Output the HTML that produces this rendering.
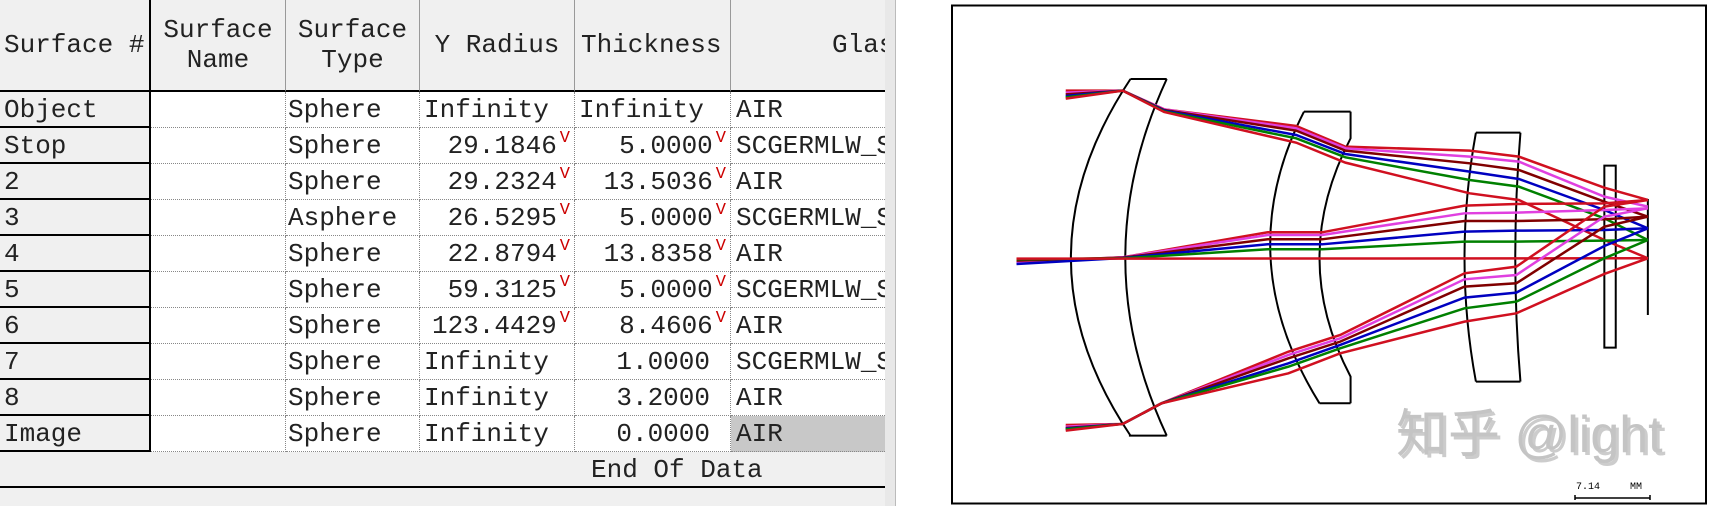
<!DOCTYPE html>
<html><head><meta charset="utf-8"><style>
*{margin:0;padding:0;box-sizing:border-box}
body{width:1712px;height:506px;overflow:hidden;background:#fff;position:relative;font-family:"Liberation Mono","DejaVu Sans Mono",monospace;font-size:26px;color:#222}
.t{position:absolute;left:0;top:0;width:885px;height:506px;background:#f0f0f0;overflow:hidden}
.c{position:absolute;height:36px;line-height:36px;white-space:nowrap;overflow:hidden}
.w{background:#fff;border-right:1px dotted #888;border-bottom:1px dotted #888}
.g{background:#f0f0f0;border-right:2px solid #000;border-bottom:2px solid #000}
.v{color:#c00;font-size:17px;vertical-align:top;line-height:22px;margin-left:3px}
.h{position:absolute;top:0;height:92px;border-right:1px solid #999;border-bottom:2px solid #000;background:#f0f0f0;text-align:center;line-height:30px;padding-top:15px}
</style></head><body>
<div class="t">
<div class="h" style="left:0;width:151px;border-right:2px solid #000;text-align:left;padding-top:30px;padding-left:4px">Surface #</div>
<div class="h" style="left:151px;width:135px">Surface<br>Name</div>
<div class="h" style="left:286px;width:134px">Surface<br>Type</div>
<div class="h" style="left:420px;width:155px;padding-top:30px">Y Radius</div>
<div class="h" style="left:575px;width:156px;padding-top:30px;text-align:left;padding-left:6px">Thickness</div>
<div class="h" style="left:731px;width:154px;padding-top:30px;text-align:left;padding-left:101px;border-right:none">Glass</div>
<div id="rows"></div>
<div style="position:absolute;left:0;top:452px;width:885px;height:36px;border-bottom:2px solid #000;line-height:36px;padding-left:591px">End Of Data</div>
</div>
<div style="position:absolute;left:885px;top:0;width:11px;height:506px;background:#e8e8e8;border-right:1px solid #bbb"></div>
<script>
var d=[["Object","Sphere","Infinity",0,"Infinity",0,"AIR",1],
["Stop","Sphere","29.1846",1,"5.0000",1,"SCGERMLW_S"],
["2","Sphere","29.2324",1,"13.5036",1,"AIR"],
["3","Asphere","26.5295",1,"5.0000",1,"SCGERMLW_S"],
["4","Sphere","22.8794",1,"13.8358",1,"AIR"],
["5","Sphere","59.3125",1,"5.0000",1,"SCGERMLW_S"],
["6","Sphere","123.4429",1,"8.4606",1,"AIR"],
["7","Sphere","Infinity",0,"1.0000",0,"SCGERMLW_S"],
["8","Sphere","Infinity",0,"3.2000",0,"AIR"],
["Image","Sphere","Infinity",0,"0.0000",0,"AIR"]];
var h="";
d.forEach(function(r,i){var y=92+i*36;
h+='<div class="c g" style="left:0;top:'+y+'px;width:151px;padding-left:4px">'+r[0]+'</div>';
h+='<div class="c w" style="left:151px;top:'+y+'px;width:135px"></div>';
h+='<div class="c w" style="left:286px;top:'+y+'px;width:134px;padding-left:2px">'+r[1]+'</div>';
var inf2=r[2]=="Infinity";
h+='<div class="c w" style="left:420px;top:'+y+'px;width:155px;'+(inf2?'padding-left:4px':'text-align:right;padding-right:'+(r[3]?4:20)+'px')+'">'+r[2]+(r[3]?'<span class="v">V</span>':'')+'</div>';
var inf=r[4]=="Infinity";
h+='<div class="c w" style="left:575px;top:'+y+'px;width:156px;'+(inf?'padding-left:4px':'text-align:right;padding-right:'+(r[5]?4:20)+'px')+'">'+r[4]+(r[5]?'<span class="v">V</span>':'')+'</div>';
h+='<div class="c w" style="left:731px;top:'+y+'px;width:154px;padding-left:5px;border-right:none;'+(i==9?'background:#c8c8c8':'')+'">'+r[6]+'</div>';
});
document.getElementById("rows").innerHTML=h;
</script>
<svg style="position:absolute;left:0;top:0" width="1712" height="506">
<rect x="952" y="5.5" width="754" height="498" fill="none" stroke="#000" stroke-width="2"/>
<g transform="translate(900,0) scale(0.5179,0.3333)" fill="none" stroke-width="2">
<g stroke="#000">
<path vector-effect="non-scaling-stroke" d="M445,237 Q215,775 445,1307 M515,237 Q355,775 515,1307 M445,237H515 M442,1307H515"/>
<path vector-effect="non-scaling-stroke" d="M780,335 Q636,775 810,1210 M870,335V415 Q750,775 870,1130V1210 M780,335H870 M810,1210H870"/>
<path vector-effect="non-scaling-stroke" d="M1112,398 Q1068,775 1112,1145 M1198,398 Q1178,775 1198,1145 M1112,398H1198 M1112,1145H1198"/>
<rect vector-effect="non-scaling-stroke" x="1360" y="497" width="22" height="546"/>
<path vector-effect="non-scaling-stroke" d="M1444,597V945"/>
</g>
<g stroke-width="2.5">
<path vector-effect="non-scaling-stroke" stroke="#d01020" d="M320,272 430,272 510,328 765,378 860,440 1100,452 1195,470 1360,563 1444,600"/>
<path vector-effect="non-scaling-stroke" stroke="#e040e0" d="M320,278 430,272 510,328 765,385 860,445 1100,470 1195,485 1360,590 1444,620"/>
<path vector-effect="non-scaling-stroke" stroke="#800000" d="M320,283 430,272 510,330 765,392 860,452 1100,490 1195,510 1360,605 1444,650"/>
<path vector-effect="non-scaling-stroke" stroke="#0000c0" d="M320,288 430,272 510,332 765,405 860,462 1100,515 1195,537 1360,630 1444,685"/>
<path vector-effect="non-scaling-stroke" stroke="#008000" d="M320,292 430,272 510,334 765,415 860,472 1100,540 1195,560 1360,655 1444,720"/>
<path vector-effect="non-scaling-stroke" stroke="#d01020" d="M320,296 430,272 510,336 765,428 860,488 1100,580 1195,600 1360,720 1444,775"/>
<path vector-effect="non-scaling-stroke" stroke="#d01020" d="M225,790 430,772 710,697 815,697 1090,617 1190,612 1360,610 1444,600"/>
<path vector-effect="non-scaling-stroke" stroke="#e040e0" d="M225,787 430,772 710,705 815,705 1090,640 1190,638 1360,630 1444,625"/>
<path vector-effect="non-scaling-stroke" stroke="#800000" d="M225,782 430,773 710,718 815,718 1090,663 1190,663 1360,658 1444,650"/>
<path vector-effect="non-scaling-stroke" stroke="#0000c0" d="M225,792 430,774 710,733 815,733 1090,695 1190,692 1360,690 1444,685"/>
<path vector-effect="non-scaling-stroke" stroke="#008000" d="M225,778 430,775 710,748 815,748 1090,725 1190,725 1360,722 1444,720"/>
<path vector-effect="non-scaling-stroke" stroke="#d01020" d="M225,776 1444,775"/>
<path vector-effect="non-scaling-stroke" stroke="#d01020" d="M320,1275 430,1272 505,1210 750,1055 850,1005 1090,820 1190,800 1360,620 1444,600"/>
<path vector-effect="non-scaling-stroke" stroke="#e040e0" d="M320,1280 430,1272 505,1210 750,1065 850,1015 1090,838 1190,825 1360,650 1444,625"/>
<path vector-effect="non-scaling-stroke" stroke="#800000" d="M320,1284 430,1272 505,1210 750,1075 850,1025 1090,860 1190,850 1360,680 1444,650"/>
<path vector-effect="non-scaling-stroke" stroke="#0000c0" d="M320,1286 430,1272 505,1210 750,1090 850,1035 1090,893 1190,878 1360,738 1444,685"/>
<path vector-effect="non-scaling-stroke" stroke="#008000" d="M320,1288 430,1272 505,1210 750,1100 850,1045 1090,925 1190,905 1360,775 1444,720"/>
<path vector-effect="non-scaling-stroke" stroke="#d01020" d="M320,1292 430,1272 505,1210 750,1120 850,1060 1090,965 1190,940 1360,822 1444,775"/>
</g>
</g>
<text x="1399" y="455" font-family="'Liberation Sans','Noto Sans CJK SC',sans-serif" font-size="52" fill="#9a9a9a" opacity="0.5">知乎 @light</text>
<text x="1396" y="452" font-family="'Liberation Sans','Noto Sans CJK SC',sans-serif" font-size="52" fill="#c4c4c4">知乎 @light</text>
<text x="1576" y="489" font-family="'Liberation Mono',monospace" font-size="10" fill="#000">7.14</text>
<text x="1630" y="489" font-family="'Liberation Mono',monospace" font-size="10" fill="#000">MM</text>
<path d="M1575,498H1650 M1575,495V500 M1650,495V500" stroke="#000" stroke-width="1.5"/>
</svg>
</body></html>
